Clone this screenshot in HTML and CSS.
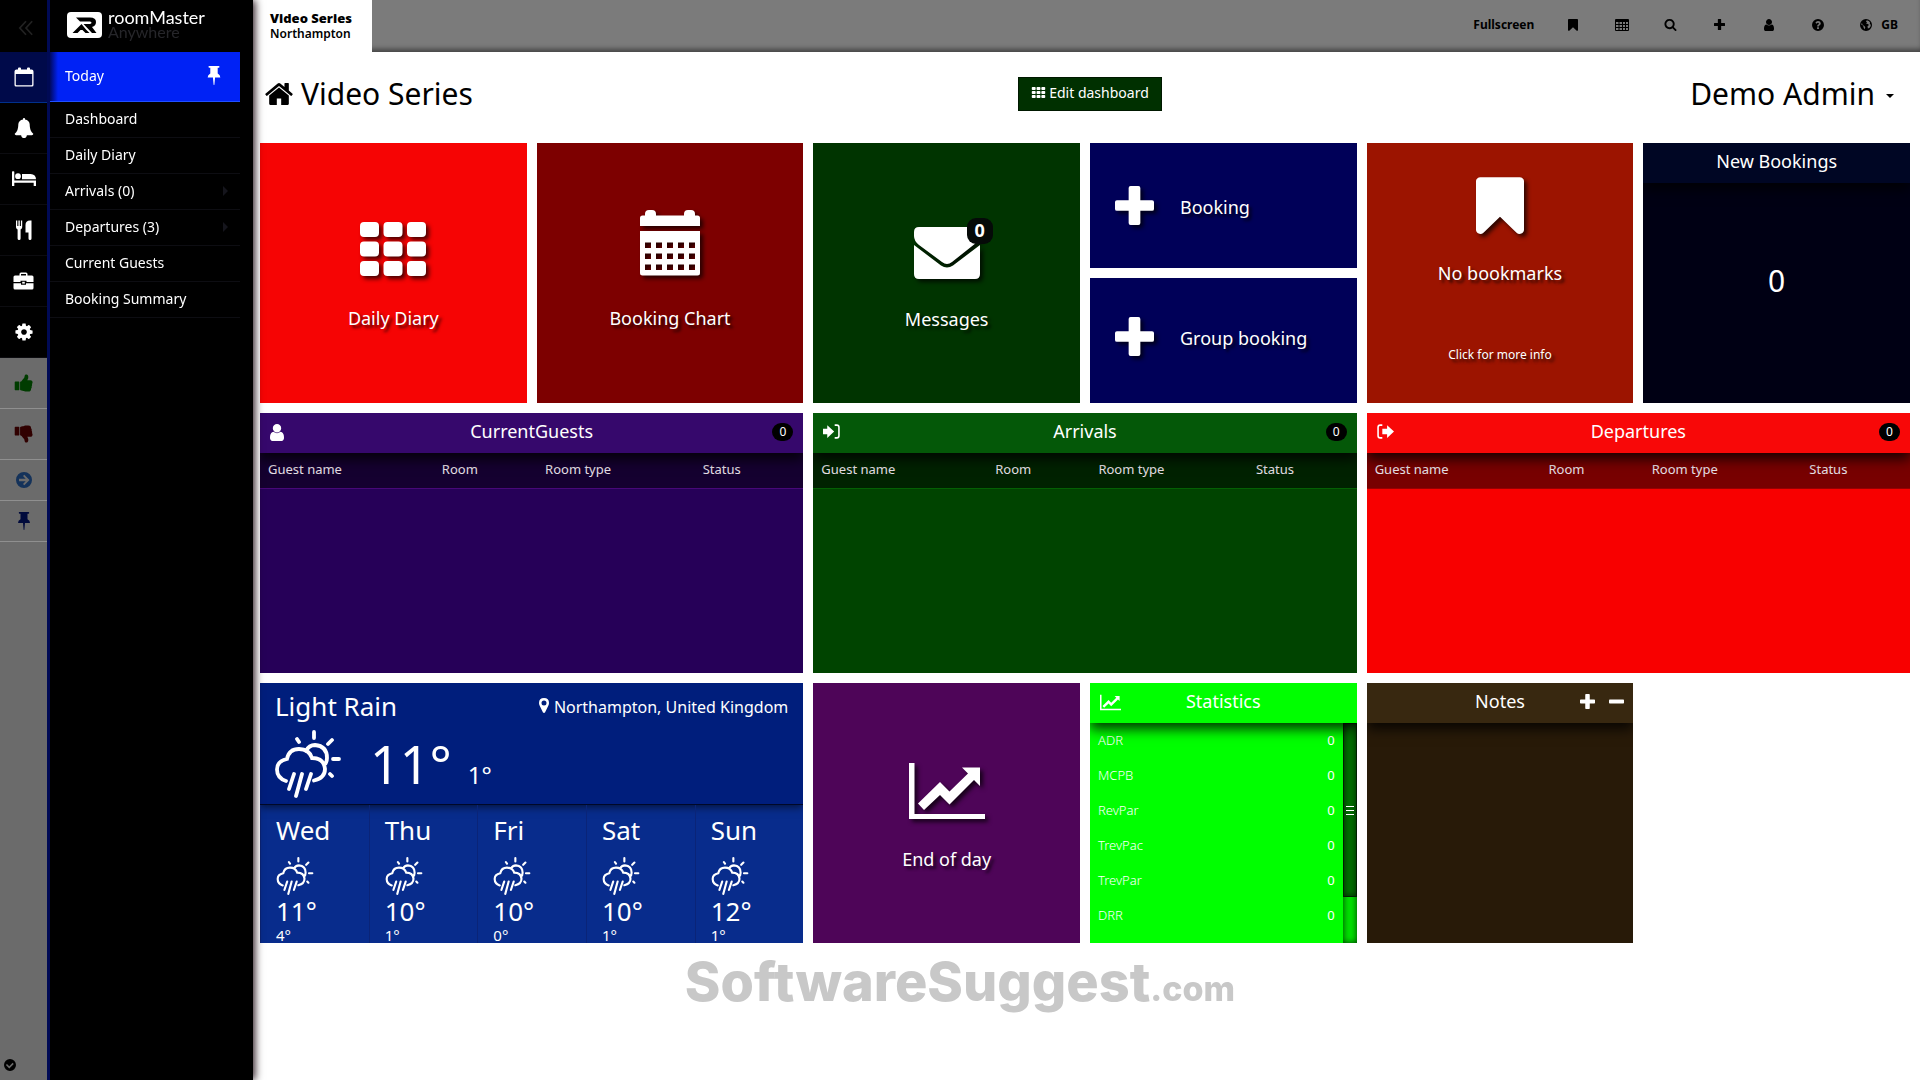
FILE: index.html
```html
<!DOCTYPE html>
<html lang="en">
<head>
    <meta charset="UTF-8">
    <meta name="viewport" content="width=device-width, initial-scale=1.0">
    <title>roomMaster Anywhere - Dashboard</title>
    <link rel="stylesheet" href="styles.css">
</head>
<body>
    <!-- Icon sprite -->
    <svg class="sprite" aria-hidden="true">
        <symbol id="i-collapse" viewBox="0 0 16 16"><path d="M8 2L2.500 8L8 14M13.500 2L8 8L13.500 14" fill="none" stroke="currentColor" stroke-width="1.500"/></symbol>
        <symbol id="i-calendar-o" viewBox="0 0 20 20"><path fill-rule="evenodd" d="M4 2.500V1.500a1 1 0 0 1 1-1h1a1 1 0 0 1 1 1v1h6v-1a1 1 0 0 1 1-1h1a1 1 0 0 1 1 1v1h1.500q2 0 2 2V18q0 1.500-1.500 1.500H2Q.5 19.500.5 18V4.500q0-2 2-2zM1.800 7v10.500q0 .8.800.8h14.800q.8 0 .8-.8V7z"/></symbol>
        <symbol id="i-bell" viewBox="0 0 1792 1792"><path d="M1728 1408q0 52-38 90t-90 38h-448q0 106-75 181t-181 75-181-75-75-181h-448q-52 0-90-38t-38-90q50-42 91-88t85-119.500 74.500-158.500 50-206 19.500-260q0-152 117-282.500t307-158.500q-8-19-8-39 0-40 28-68t68-28 68 28 28 68q0 20-8 39 190 28 307 158.500t117 282.500q0 139 19.500 260t50 206 74.500 158.500 85 119.500 91 88z"/></symbol>
        <symbol id="i-bed" viewBox="0 0 24 16"><path d="M0 1q0-.7.7-.7h.8q.8 0 .8.700v8.600H24V15h-2.300v-3.200H2.300V15H0zM6 2.300a2.900 2.900 0 1 1 0 5.800a2.900 2.900 0 0 1 0-5.800zM10 3h8.500q5.500.5 5.500 5.300H10z"/></symbol>
        <symbol id="i-cutlery" viewBox="0 0 18 20"><path d="M1 .5h1.300V6h1.100V.5h1.400V6h1.100V.5h1.300v6.700q0 1.600-1.600 2.200v9q0 1.600-1.500 1.600t-1.500-1.600v-9Q1 8.800 1 7.200zM10.500 5q0-4.500 4.500-4.500h1.500V18.500q0 1.500-1.500 1.500t-1.500-1.500v-6h-3z"/></symbol>
        <symbol id="i-briefcase" viewBox="0 0 20 18"><path fill-rule="evenodd" d="M6 3.500V2q0-1.500 1.500-1.500h5Q14 .5 14 2v1.500h4.500q1.500 0 1.500 1.500v5h-7V8.700H7V10H0V5q0-1.500 1.500-1.500zm1.500 0h5V2h-5zM0 11.200h7.500v1.600h5v-1.600H20V16q0 1.500-1.500 1.500h-17Q0 17.500 0 16z"/><path d="M8.700 9.800h2.600v1.800H8.700z"/></symbol>
        <symbol id="i-cog" viewBox="0 0 1792 1792"><path d="M1152 896q0-106-75-181t-181-75-181 75-75 181 75 181 181 75 181-75 75-181zm512-109v222q0 12-8 23t-20 13l-185 28q-19 54-39 91 35 50 107 138 10 12 10 25t-9 23q-27 37-99 108t-94 71q-12 0-26-9l-138-108q-44 23-91 38-16 136-29 186-7 28-36 28h-222q-14 0-24.500-8.500t-11.500-21.500l-28-184q-49-16-90-37l-141 107q-10 9-25 9-14 0-25-11-126-114-165-168-7-10-7-23 0-12 8-23 15-21 51-66.500t54-70.500q-27-50-41-99l-183-27q-13-2-21-12.500t-8-23.500v-222q0-12 8-23t19-13l186-28q14-46 39-92-40-57-107-138-10-12-10-24 0-10 9-23 26-36 98.500-107.500t94.500-71.500q13 0 26 10l138 107q44-23 91-38 16-136 29-186 7-28 36-28h222q14 0 24.500 8.500t11.500 21.500l28 184q49 16 90 37l142-107q9-9 24-9 13 0 25 10 129 119 165 170 7 8 7 22 0 12-8 23-15 21-51 66.500t-54 70.500q26 50 41 98l183 28q13 2 21 12.500t8 23.500z"/></symbol>
        <symbol id="i-thumb" viewBox="0 0 1792 1792"><path d="M480 832v640q0 26-19 45t-45 19h-288q-26 0-45-19t-19-45v-640q0-26 19-45t45-19h288q26 0 45 19t19 45zm1184 0q0 86-55 149 15 44 15 76 3 76-43 137 17 56 0 117-15 57-54 94 9 112-49 181-64 76-197 78h-129q-66 0-144-15.500t-121.500-29-120.500-39.500q-123-43-158-44-26-1-45-19.500t-19-44.500v-641q0-25 18-43.500t43-20.500q24-2 76-59t101-121q68-87 101-120 18-18 31-48t17.500-48.500 13.500-60.500q7-39 12.500-61t19.500-52 34-50q19-19 45-19 46 0 82.500 10.500t60 26 40 40.500 24 45 12 50 5 45 .5 39q0 38-9.500 76t-19 60-27.500 56q-3 6-10 18t-11 22-8 24h277q78 0 135 57t57 135z"/></symbol>
        <symbol id="i-arrow-circle" viewBox="0 0 16 16"><path fill-rule="evenodd" d="M8 0a8 8 0 1 1 0 16A8 8 0 0 1 8 0zM8.300 2.800L7 4.100l2.700 2.700H3v2.400h6.700L7 11.900l1.300 1.300L13.500 8z"/></symbol>
        <symbol id="i-pin" viewBox="0 0 12 18"><path d="M1.500 0h9q.7 0 .7.800t-.7.900H9.500v5.500Q12 8.500 12 11H7l-.6 6.500q-.4 1-.8 0L5 11H0q0-2.500 2.500-3.800V1.700h-1q-.7 0-.7-.9T1.500 0z"/></symbol>
        <symbol id="i-check" viewBox="0 0 16 16"><path fill-rule="evenodd" d="M8 0a8 8 0 1 1 0 16A8 8 0 0 1 8 0zM4 6.500L2.500 8L7 12.500l6-6L11.500 5L7 9.500z"/></symbol>
        <symbol id="i-bookmark" viewBox="256 128 1280 1536"><path d="M1420 128q23 0 44 9 33 13 52.500 41t19.500 62v1289q0 34-19.500 62t-52.500 41q-19 8-44 8-48 0-83-32l-441-424-441 424q-36 33-83 33-23 0-44-9-33-13-52.500-41t-19.500-62v-1289q0-34 19.500-62t52.500-41q21-9 44-9h1048z"/></symbol>
        <symbol id="i-table" viewBox="0 0 14 12"><path fill-rule="evenodd" d="M1 0h12q1 0 1 1v10q0 1-1 1H1q-1 0-1-1V1Q0 0 1 0zM1 3v2h2.500V3zm3.500 0v2H7V3zM8 3v2h2V3zm3 0v2h2V3zM1 6v2h2.500V6zm3.500 0v2H7V6zM8 6v2h2V6zm3 0v2h2V6zM1 9v2h2.500V9zm3.500 0v2H7V9zM8 9v2h2V9zm3 0v2h2V9z"/></symbol>
        <symbol id="i-search" viewBox="0 0 1792 1792"><path d="M1216 832q0-185-131.500-316.500t-316.500-131.500-316.500 131.500-131.500 316.500 131.500 316.500 316.500 131.500 316.500-131.500 131.500-316.500zm512 832q0 52-38 90t-90 38q-54 0-90-38l-343-342q-179 124-399 124-143 0-273.500-55.500t-225-150-150-225-55.500-273.500 55.500-273.500 150-225 225-150 273.500-55.500 273.500 55.500 225 150 150 225 55.500 273.500q0 220-124 399l343 343q37 37 37 90z"/></symbol>
        <symbol id="i-plus" viewBox="0 0 40 40"><path d="M16 0h8q2 0 2 2v12.500h12q2 0 2 2v7q0 2-2 2H26V38q0 2-2 2h-8q-2 0-2-2V25.500H2q-2 0-2-2v-7q0-2 2-2h12V2q0-2 2-2z"/></symbol>
        <symbol id="i-minus" viewBox="0 0 40 40"><path d="M2 14.500h36q2 0 2 2v7q0 2-2 2H2q-2 0-2-2v-7q0-2 2-2z"/></symbol>
        <symbol id="i-user" viewBox="256 128 1280 1536"><path d="M1536 1399q0 109-62.500 187t-150.500 78h-854q-88 0-150.500-78t-62.500-187q0-85 8.500-160.500t31.500-152 58.500-131 94-89 134.500-34.500q131 128 313 128t313-128q76 0 134.500 34.500t94 89 58.500 131 31.500 152 8.500 160.500zm-256-887q0 159-112.500 271.500t-271.500 112.500-271.500-112.500-112.500-271.500 112.500-271.500 271.500-112.500 271.500 112.500 112.500 271.500z"/></symbol>
        <symbol id="i-help" viewBox="0 0 16 16"><path fill-rule="evenodd" d="M8 0a8 8 0 1 1 0 16A8 8 0 0 1 8 0zM6.800 11v2.200h2.400V11zM4.500 5l1.700 1.300Q7 5 8 5q1.200 0 1.200 1T7.800 7.500Q6.800 8 6.800 10h2.400q0-1 1-1.600 1.500-.9 1.500-2.600Q11.500 2.800 8 2.800 5.700 2.800 4.500 5z"/></symbol>
        <symbol id="i-globe" viewBox="0 0 16 16"><path fill-rule="evenodd" d="M8 0a8 8 0 1 1 0 16A8 8 0 0 1 8 0zM9 1.800l-1 1.700 1.500 1L8 6l2.500.5L12 8l-2 1.500.5 3 2-.5Q14.500 10 14.500 7.500L13 6.500l.5-2Q12 2.200 9 1.800zM2.500 5l-.8 2.500 2.500 1.300L5 12l1.500 1.500L7 10.500 5 8.500 3.500 8z"/></symbol>
        <symbol id="i-home" viewBox="80 250 1632 1290"><path d="M1472 992v480q0 26-19 45t-45 19h-384v-384h-256v384h-384q-26 0-45-19t-19-45v-480q0-1 .5-3t.5-3l575-474 575 474q1 2 1 6zm223-69l-62 74q-8 9-21 11h-3q-13 0-21-7l-692-577-692 577q-12 8-24 7-13-2-21-11l-62-74q-8-10-7-23.500t11-21.500l719-599q32-26 76-26t76 26l244 204v-195q0-14 9-23t23-9h192q14 0 23 9t9 23v408l219 182q10 8 11 21.500t-7 23.500z"/></symbol>
        <symbol id="i-th" viewBox="0 0 66 54"><path d="M4 0h11q4 0 4 4v7q0 4-4 4H4q-4 0-4-4V4q0-4 4-4zM27.500 0h11q4 0 4 4v7q0 4-4 4h-11q-4 0-4-4V4q0-4 4-4zM51 0h11q4 0 4 4v7q0 4-4 4H51q-4 0-4-4V4q0-4 4-4zM4 19.500h11q4 0 4 4v7q0 4-4 4H4q-4 0-4-4v-7q0-4 4-4zM27.500 19.500h11q4 0 4 4v7q0 4-4 4h-11q-4 0-4-4v-7q0-4 4-4zM51 19.500h11q4 0 4 4v7q0 4-4 4H51q-4 0-4-4v-7q0-4 4-4zM4 39h11q4 0 4 4v7q0 4-4 4H4q-4 0-4-4v-7q0-4 4-4zM27.500 39h11q4 0 4 4v7q0 4-4 4h-11q-4 0-4-4v-7q0-4 4-4zM51 39h11q4 0 4 4v7q0 4-4 4H51q-4 0-4-4v-7q0-4 4-4z"/></symbol>
        <symbol id="i-calendar" viewBox="0 0 60 66"><path fill-rule="evenodd" d="M0 16V8q0-2.500 2.500-2.500H5V4q0-4 4-4h3q4 0 4 4v1.500h28V4q0-4 4-4h3q4 0 4 4v1.500h2.500Q60 5.500 60 8v8zM0 21h60v42q0 2.500-2.500 2.500h-55Q0 65.500 0 63zM5 32.500v5.500h6v-5.500zm11 0v5.500h6v-5.500zm11 0v5.500h6v-5.500zm11 0v5.500h6v-5.500zm11 0v5.500h6v-5.500zM5 43.500v5.500h6v-5.500zm11 0v5.500h6v-5.500zm11 0v5.500h6v-5.500zm11 0v5.500h6v-5.500zm11 0v5.500h6v-5.500zM5 54.500v5.500h6v-5.500zm11 0v5.500h6v-5.500zm11 0v5.500h6v-5.500zm11 0v5.500h6v-5.500zm11 0v5.500h6v-5.500z"/></symbol>
        <symbol id="i-envelope" viewBox="0 0 66 52"><path d="M5 0h56q5 0 5 5v4q0 4-4 7L38 35q-5 4-10 0L5 18Q0 14 0 9V5q0-5 5-5zM0 18l27 20.500q6 4 12 0L66 18v29q0 5-5 5H5q-5 0-5-5z"/></symbol>
        <symbol id="i-chart" viewBox="0 0 76 56"><path d="M0 0h5.500v51H76v5H0zM9 40.500L31 19l9.500 9.500L59 10.500 53 4.500h18V23l-6-6-24.500 24.500L31 32 15 47z"/></symbol>
        <symbol id="i-sign-in" viewBox="0 0 16 14"><path d="M0 4.500h4V1l6.500 6L4 13V9.500H0z"/><path d="M11 1h2q2 0 2 2v8q0 2-2 2h-2" fill="none" stroke="currentColor" stroke-width="1.500"/></symbol>
        <symbol id="i-sign-out" viewBox="0 0 16 14"><path d="M5 4.500h4.500V1L16 7l-6.500 6V9.500H5z"/><path d="M5 1H3Q1 1 1 3v8q0 2 2 2h2" fill="none" stroke="currentColor" stroke-width="1.500"/></symbol>
        <symbol id="i-marker" viewBox="0 0 10 15"><path fill-rule="evenodd" d="M5 0q5 0 5 5 0 1.300-.6 2.500L6 14.500q-1 .9-2 0L.6 7.500Q0 6.300 0 5q0-5 5-5zm0 2.500a2.500 2.500 0 1 0 0 5a2.500 2.500 0 0 0 0-5z"/></symbol>
        <symbol id="i-rain" viewBox="0 0 66 68"><path d="M11 51Q2 48 2 39.500T12 29q2-10 12-10t13 9q12 0 13 11 0 9-11 11.500M31 21q3-6 9-6 12 1 12 13 0 5-3 7M39 2v6M22 9l2 3M57 10l-4 4M58 29h6M55 44l2 2M19 44l-5 15M27 44l-6 22M36 44l-5 15" fill="none" stroke="currentColor" stroke-width="3.800" stroke-linecap="round"/></symbol>
        <symbol id="i-logo" viewBox="0 0 35 26"><rect width="35" height="26" rx="4" fill="#fff"/><path d="M9 5.500h14q6 0 6 4.500 0 4-4 5l4.500 6H25l-8.500-9H23q1.500-.2 1.500-1.200T23 9.500H13zM5.500 21l9-9 4.500 5.500 3.500 3.500h-4l-3-3-2 0-3 3z" fill="#000"/></symbol>
    </svg>

    <div class="app">
        <!-- Icon rail -->
        <nav class="rail" aria-label="Sections">
            <a href="#" class="rail-item rail-collapse" aria-label="Collapse"><svg width="18" height="18"><use href="#i-collapse"/></svg></a>
            <a href="#" class="rail-item active" aria-label="Today"><svg width="20" height="20"><use href="#i-calendar-o"/></svg></a>
            <a href="#" class="rail-item" aria-label="Alerts"><svg width="20" height="20"><use href="#i-bell"/></svg></a>
            <a href="#" class="rail-item" aria-label="Rooms"><svg width="24" height="16"><use href="#i-bed"/></svg></a>
            <a href="#" class="rail-item" aria-label="Restaurant"><svg width="18" height="20"><use href="#i-cutlery"/></svg></a>
            <a href="#" class="rail-item" aria-label="Business"><svg width="21" height="18"><use href="#i-briefcase"/></svg></a>
            <a href="#" class="rail-item" aria-label="Settings"><svg width="20" height="20"><use href="#i-cog"/></svg></a>
            <div class="rail-tools">
                <a href="#" class="rail-item tool up" aria-label="Like"><svg width="20" height="20"><use href="#i-thumb"/></svg></a>
                <a href="#" class="rail-item tool down" aria-label="Dislike"><svg width="20" height="20"><use href="#i-thumb"/></svg></a>
                <a href="#" class="rail-item tool small next" aria-label="Next"><svg width="16" height="16"><use href="#i-arrow-circle"/></svg></a>
                <a href="#" class="rail-item tool small pinned" aria-label="Pin"><svg width="12" height="18"><use href="#i-pin"/></svg></a>
                <svg class="rail-status" width="12" height="12"><use href="#i-check"/></svg>
            </div>
        </nav>

        <!-- Menu -->
        <aside class="menu">
            <div class="brand">
                <svg width="35" height="26"><use href="#i-logo"/></svg>
                <div class="brand-name">roomMaster<span>Anywhere</span></div>
            </div>
            <div class="menu-title">Today <svg width="14" height="19"><use href="#i-pin"/></svg></div>
            <ul>
                <li><a href="#">Dashboard</a></li>
                <li><a href="#">Daily Diary</a></li>
                <li><a href="#" class="more">Arrivals (0)</a></li>
                <li><a href="#" class="more">Departures (3)</a></li>
                <li><a href="#">Current Guests</a></li>
                <li><a href="#">Booking Summary</a></li>
            </ul>
        </aside>

        <div class="page">
            <header class="topbar">
                <div class="property"><strong>Video Series</strong><span>Northampton</span></div>
                <nav class="topnav" aria-label="Tools">
                    <a href="#" class="wide">Fullscreen</a>
                    <a href="#" aria-label="Bookmarks"><svg width="10" height="12"><use href="#i-bookmark"/></svg></a>
                    <a href="#" aria-label="Chart"><svg width="14" height="12"><use href="#i-table"/></svg></a>
                    <a href="#" aria-label="Search"><svg width="13" height="13"><use href="#i-search"/></svg></a>
                    <a href="#" aria-label="Add"><svg width="11" height="11"><use href="#i-plus"/></svg></a>
                    <a href="#" aria-label="Account"><svg width="10" height="12"><use href="#i-user"/></svg></a>
                    <a href="#" aria-label="Help"><svg width="12" height="12"><use href="#i-help"/></svg></a>
                    <a href="#" class="wide lang"><svg width="12" height="12"><use href="#i-globe"/></svg>GB</a>
                </nav>
            </header>

            <div class="heading">
                <h1><svg width="28" height="22"><use href="#i-home"/></svg>Video Series</h1>
                <button type="button" class="edit"><svg width="15" height="11"><use href="#i-th"/></svg>Edit dashboard</button>
                <button type="button" class="account">Demo Admin<span class="caret"></span></button>
            </div>

            <main class="grid">
                <a href="#" class="tile red"><svg width="66" height="54"><use href="#i-th"/></svg><span>Daily Diary</span></a>
                <a href="#" class="tile maroon"><svg width="60" height="66"><use href="#i-calendar"/></svg><span>Booking Chart</span></a>
                <a href="#" class="tile green">
                    <div class="mail"><svg width="66" height="52"><use href="#i-envelope"/></svg><b>0</b></div>
                    <span>Messages</span>
                </a>
                <div class="split">
                    <a href="#"><svg width="39" height="39"><use href="#i-plus"/></svg><span>Booking</span></a>
                    <a href="#"><svg width="39" height="39"><use href="#i-plus"/></svg><span>Group booking</span></a>
                </div>
                <a href="#" class="tile rust"><svg width="48" height="58"><use href="#i-bookmark"/></svg><span>No bookmarks</span><small>Click for more info</small></a>
                <section class="widget navy">
                    <h2>New Bookings</h2>
                    <div class="widget-body big">0</div>
                </section>

                <section class="widget list purple">
                    <h2><svg width="14" height="17"><use href="#i-user"/></svg>CurrentGuests<span class="count">0</span></h2>
                    <div class="widget-body">
                        <table><thead><tr><th>Guest name</th><th>Room</th><th>Room type</th><th>Status</th></tr></thead></table>
                    </div>
                </section>
                <section class="widget list forest">
                    <h2><svg width="17" height="15"><use href="#i-sign-in"/></svg>Arrivals<span class="count">0</span></h2>
                    <div class="widget-body">
                        <table><thead><tr><th>Guest name</th><th>Room</th><th>Room type</th><th>Status</th></tr></thead></table>
                    </div>
                </section>
                <section class="widget list scarlet">
                    <h2><svg width="17" height="15"><use href="#i-sign-out"/></svg>Departures<span class="count">0</span></h2>
                    <div class="widget-body">
                        <table><thead><tr><th>Guest name</th><th>Room</th><th>Room type</th><th>Status</th></tr></thead></table>
                    </div>
                </section>

                <section class="weather">
                    <div class="now">
                        <div class="now-head">
                            <h2>Light Rain</h2>
                            <span><svg width="10" height="15"><use href="#i-marker"/></svg>Northampton, United Kingdom</span>
                        </div>
                        <div class="now-temp"><svg width="66" height="68"><use href="#i-rain"/></svg><b>11°</b><i>1°</i></div>
                    </div>
                    <div class="days">
                        <div><h3>Wed</h3><svg width="38" height="38"><use href="#i-rain"/></svg><b>11°</b><i>4°</i></div>
                        <div><h3>Thu</h3><svg width="38" height="38"><use href="#i-rain"/></svg><b>10°</b><i>1°</i></div>
                        <div><h3>Fri</h3><svg width="38" height="38"><use href="#i-rain"/></svg><b>10°</b><i>0°</i></div>
                        <div><h3>Sat</h3><svg width="38" height="38"><use href="#i-rain"/></svg><b>10°</b><i>1°</i></div>
                        <div><h3>Sun</h3><svg width="38" height="38"><use href="#i-rain"/></svg><b>12°</b><i>1°</i></div>
                    </div>
                </section>
                <a href="#" class="tile plum"><svg width="76" height="56"><use href="#i-chart"/></svg><span>End of day</span></a>
                <section class="widget lime">
                    <h2><svg width="21" height="17"><use href="#i-chart"/></svg>Statistics</h2>
                    <div class="widget-body stats">
                        <dl>
                            <div><dt>ADR</dt><dd>0</dd></div>
                            <div><dt>MCPB</dt><dd>0</dd></div>
                            <div><dt>RevPar</dt><dd>0</dd></div>
                            <div><dt>TrevPac</dt><dd>0</dd></div>
                            <div><dt>TrevPar</dt><dd>0</dd></div>
                            <div><dt>DRR</dt><dd>0</dd></div>
                        </dl>
                        <div class="scroll"><div class="thumb"><span></span></div></div>
                    </div>
                </section>
                <section class="widget brown">
                    <h2>Notes
                        <span class="actions">
                            <button type="button" aria-label="Add note"><svg width="15" height="15"><use href="#i-plus"/></svg></button>
                            <button type="button" aria-label="Remove note"><svg width="15" height="15"><use href="#i-minus"/></svg></button>
                        </span>
                    </h2>
                    <div class="widget-body"></div>
                </section>
            </main>
        </div>
    </div>

    <div class="watermark">SoftwareSuggest<span>.com</span></div>
</body>
</html>
```

FILE: styles.css
```css
* {
    box-sizing: border-box;
}

body {
    font-family: "Noto Sans", "Open Sans", sans-serif;
    font-size: 14px;
    margin: 0;
    color: #000;
    background: #fff;
}

a {
    color: inherit;
    text-decoration: none;
}

button {
    font: inherit;
    color: inherit;
    background: none;
    border: none;
    padding: 0;
    cursor: pointer;
}

h1, h2, h3, ul, dl, dd {
    margin: 0;
    padding: 0;
    font-weight: 400;
}

svg {
    fill: currentColor;
    flex: none;
}

.sprite {
    position: absolute;
    width: 0;
    height: 0;
}

.app {
    display: flex;
    min-height: 100vh;
}

/* Icon rail */
.rail {
    width: 50px;
    flex: none;
    display: flex;
    flex-direction: column;
    background: #000;
    border-right: 3px solid #000a55;
    color: #fff;
    position: relative;
    z-index: 3;
}

.rail-item {
    display: flex;
    align-items: center;
    justify-content: center;
    height: 51px;
    border-bottom: 1px solid #0c0c10;
}

.rail-collapse {
    height: 52px;
    padding: 4px 0 0 4px;
    border: none;
    color: #222;
}

.rail-item.active {
    background: #000a4a;
    border-color: #00308c;
}

.rail-tools {
    flex: 1;
    display: flex;
    flex-direction: column;
    background: #6b6b6b;
}

.rail-item.tool { border-color: #8f8f8f; }
.rail-item.small { height: 41px; }
.up { color: #003c00; }
.down { color: #300000; }
.down svg { transform: scaleY(-1); }
.next { color: #14325a; }
.pinned { color: #000a3c; }

.rail-status {
    margin: auto 0 9px 4px;
    color: #000;
}

/* Menu */
.menu {
    width: 203px;
    flex: none;
    background: #000;
    color: #fff;
    box-shadow: 2px 0 8px rgba(20, 0, 10, 0.9);
    position: relative;
    z-index: 2;
}

.brand {
    display: flex;
    align-items: flex-start;
    gap: 6px;
    height: 52px;
    padding: 12px 0 0 17px;
}

.brand-name {
    font-family: Lato, sans-serif;
    font-size: 18px;
    line-height: 16px;
    margin-top: -3px;
}

.brand-name span {
    display: block;
    font-size: 16px;
    line-height: 14px;
    color: #26262a;
}

.menu-title {
    display: flex;
    justify-content: space-between;
    align-items: center;
    height: 50px;
    margin-right: 13px;
    padding: 0 19px 2px 15px;
    background: linear-gradient(90deg, #000a60, #0022f5 8px);
    border-bottom: 1px solid #2050ff;
}

.menu ul {
    list-style: none;
    margin-right: 13px;
}

.menu li a {
    display: flex;
    align-items: center;
    justify-content: space-between;
    height: 36px;
    padding: 0 12px 2px 15px;
    border-bottom: 1px solid #0d0d12;
}

.more::after {
    content: "";
    border: 5px solid transparent;
    border-left-color: #15151c;
    border-right: none;
}

/* Top bar */
.page {
    flex: 1;
    min-width: 0;
}

.topbar {
    display: flex;
    justify-content: space-between;
    height: 52px;
    background: #7b7b7b;
    box-shadow: inset 0 -5px 5px -2px #444;
}

.property {
    width: 119px;
    padding: 10px 0 0 17px;
    background: #fff;
    line-height: 16px;
    font-size: 13px;
    font-weight: 600;
    white-space: nowrap;
}

.property span {
    display: block;
    font-size: 12px;
    line-height: 15px;
}

.topnav {
    display: flex;
    align-items: center;
    height: 49px;
    padding-right: 8px;
    font-size: 12px;
    font-weight: 700;
}

.topnav a {
    width: 49px;
    display: flex;
    align-items: center;
    justify-content: center;
    gap: 9px;
}

.topnav .wide {
    width: auto;
    padding: 0 14px;
}

.topnav .lang {
    padding-left: 18px;
}

.heading {
    display: grid;
    grid-template-columns: 1fr auto 1fr;
    align-items: center;
    height: 91px;
    padding-left: 7px;
}

.heading h1 {
    font-size: 30px;
    display: flex;
    align-items: center;
    gap: 8px;
    padding: 0 0 8px 5px;
}

.edit {
    height: 34px;
    margin-bottom: 8px;
    padding: 0 12px 2px;
    display: flex;
    align-items: center;
    gap: 3px;
    background: #003000;
    border: 1px solid #001800;
    color: #fff;
    font-size: 14px;
}

.account {
    justify-self: end;
    display: flex;
    align-items: center;
    gap: 11px;
    padding: 0 26px 8px 0;
    font-size: 30px;
}

.caret {
    border: 4px solid transparent;
    border-top-color: #000;
    border-bottom: none;
    margin-top: 4px;
}

/* Dashboard */
.grid {
    display: grid;
    grid-template-columns: repeat(6, 1fr);
    grid-auto-rows: 260px;
    gap: 10px;
    padding: 0 10px 10px 7px;
    color: #fff;
    font-size: 18px;
}

.tile {
    display: flex;
    flex-direction: column;
    align-items: center;
    text-shadow: 3px 3px 3px rgba(0, 0, 0, 0.7);
}

.tile > svg,
.mail > svg,
.split svg {
    filter: drop-shadow(3px 3px 2px rgba(0, 0, 0, 0.7));
}

.tile > span {
    line-height: 24px;
    margin-top: 30px;
}

.tile small {
    font-size: 12px;
    line-height: 18px;
    margin-top: 61px;
}

.red { background: #f60404; padding-top: 79px; }
.maroon { background: #7d0000; padding-top: 67px; }
.green { background: #003400; padding-top: 84px; }
.green > span { margin-top: 28px; }
.rust { background: #9c1400; padding-top: 34px; }
.rust > span { margin-top: 26px; }
.plum { background: #4e0558; padding-top: 80px; }
.plum > span { margin-top: 28px; }

.mail {
    position: relative;
    height: 52px;
}

.mail b {
    position: absolute;
    top: -9px;
    right: -13px;
    width: 26px;
    height: 26px;
    border-radius: 9px;
    background: #050a08;
    font-size: 18px;
    line-height: 25px;
    text-align: center;
    text-shadow: none;
}

.split {
    display: grid;
    gap: 10px;
    grid-template-rows: 1fr 1fr;
}

.split a {
    display: flex;
    align-items: center;
    gap: 26px;
    padding-left: 25px;
    background: #000058;
    text-shadow: 3px 3px 3px rgba(0, 0, 0, 0.7);
}

.split a + a {
    padding-bottom: 8px;
}

.split span {
    padding-top: 3px;
}

.widget {
    display: flex;
    flex-direction: column;
    overflow: hidden;
}

.list,
.weather {
    grid-column: span 2;
}

.widget h2 {
    font-size: 18px;
    height: 40px;
    display: flex;
    align-items: center;
    justify-content: center;
    position: relative;
    z-index: 1;
    padding-bottom: 4px;
    box-shadow: 0 6px 12px rgba(0, 0, 0, 0.8);
}

.widget h2 > svg {
    position: absolute;
    left: 10px;
    top: 11px;
}

.count {
    position: absolute;
    right: 10px;
    top: 10px;
    width: 21px;
    height: 18px;
    border-radius: 9px;
    background: #000;
    font-size: 12px;
    line-height: 18px;
    text-align: center;
}

.widget-body {
    flex: 1;
    min-height: 0;
}

.navy { background: #000014; }
.navy h2 { background: #000624; }
.purple { background: #260058; }
.purple h2 { background: #36086c; }
.purple th { background: #150030; border-color: #480878; }
.forest { background: #004400; }
.forest h2 { background: #045808; }
.forest th { background: #002200; border-color: #046004; }
.scarlet { background: #f80000; }
.scarlet h2 { background: #f80808; }
.scarlet th { background: #780000; border-color: #980000; }
.lime { background: #00ff00; }
.lime h2 { background: #00ff00; }
.brown { background: #281a08; }
.brown h2 { background: #382810; }

.big {
    font-size: 30px;
    line-height: 196px;
    text-align: center;
}

table {
    width: 100%;
    table-layout: fixed;
    border-collapse: collapse;
}

th {
    height: 35px;
    padding: 0 0 2px 8px;
    border-bottom: 1px solid;
    font-size: 13px;
    font-weight: 400;
    text-align: left;
    color: #e8e0e8;
}

th:nth-child(1) { width: 32%; }
th:nth-child(2) { width: 19%; }
th:nth-child(3) { width: 29%; }

.actions {
    position: absolute;
    right: 9px;
    top: 11px;
    display: flex;
    gap: 14px;
}

.actions button,
.actions svg {
    display: block;
}

/* Statistics */
.stats {
    display: flex;
}

.stats dl {
    flex: 1;
    font-size: 13px;
    font-weight: 300;
}

.stats dl div {
    display: flex;
    justify-content: space-between;
    height: 35px;
    line-height: 34px;
    padding: 0 8px;
}

.scroll {
    width: 14px;
    background: #00e000;
    box-shadow: inset 0 0 6px #003000;
}

.thumb {
    height: 174px;
    display: flex;
    align-items: center;
    justify-content: center;
    background: #007000;
    border: 1px solid #002000;
    box-shadow: inset 0 0 6px #002000;
}

.thumb span {
    width: 8px;
    height: 9px;
    border: solid #fff;
    border-width: 1px 0;
    background: linear-gradient(#fff, #fff) center / 8px 1px no-repeat;
}

/* Weather */
.weather {
    display: flex;
    flex-direction: column;
    overflow: hidden;
    background: #082c8c;
}

.weather b,
.weather i {
    font-weight: 400;
    font-style: normal;
}

.now {
    height: 122px;
    padding: 0 15px;
    background: #001e7c;
    border-bottom: 1px solid #000828;
    box-shadow: 0 2px 8px rgba(0, 0, 0, 0.6);
}

.now-head {
    display: flex;
    justify-content: space-between;
    align-items: center;
    height: 47px;
    font-size: 16px;
}

.now-head h2 {
    font-size: 26px;
    line-height: 36px;
    padding-bottom: 2px;
}

.now-head svg {
    margin-right: 5px;
}

.now-temp {
    display: flex;
    align-items: baseline;
}

.now-temp svg {
    align-self: flex-start;
    margin-right: 29px;
}

.now-temp b {
    font-size: 52px;
    line-height: 67px;
    margin-right: 16px;
}

.now-temp i {
    font-size: 24px;
}

.days {
    display: grid;
    grid-template-columns: repeat(5, 1fr);
    flex: 1;
    min-height: 0;
}

.days div {
    display: flex;
    flex-direction: column;
    padding: 7px 0 0 15px;
    border-left: 1px solid #0a2478;
}

.days h3,
.days b {
    font-size: 26px;
    line-height: 36px;
}

.days svg {
    margin-top: 9px;
}

.days b {
    line-height: 33px;
}

.days i {
    font-size: 15px;
    line-height: 14px;
}

.watermark {
    position: fixed;
    left: 0;
    right: 0;
    bottom: 56px;
    text-align: center;
    font-family: Inter, "Open Sans", sans-serif;
    font-size: 54px;
    font-weight: 800;
    line-height: 70px;
    color: #c8c8c8;
    pointer-events: none;
}

.watermark span {
    font-size: 34px;
}
```
